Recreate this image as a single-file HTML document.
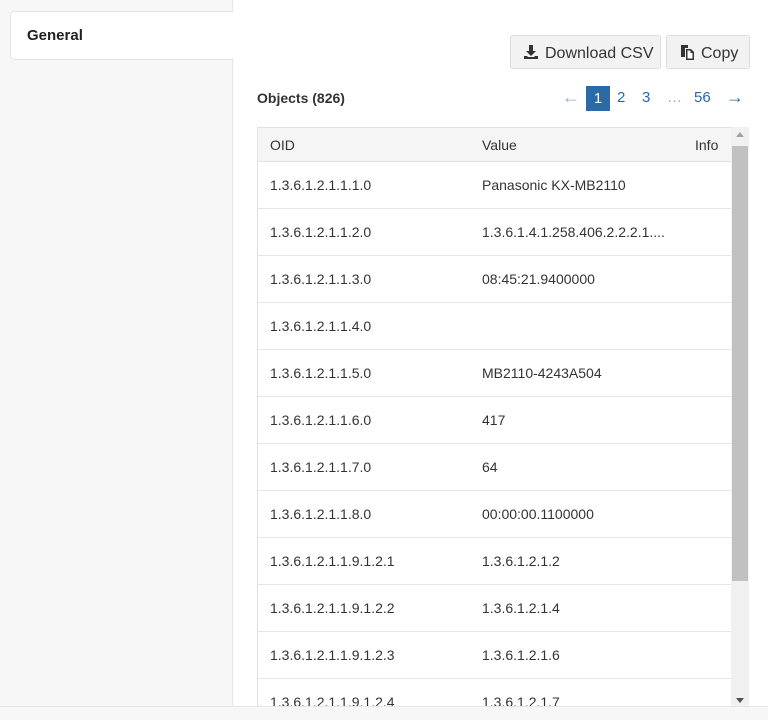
<!DOCTYPE html>
<html><head><style>
body{margin:0;width:768px;height:719px;overflow:hidden;background:#fff;font-family:"Liberation Sans",sans-serif;color:#333;position:relative}
.side{position:absolute;left:0;top:0;width:232px;height:706px;background:#f7f7f7;border-right:1px solid #e6e6e6}
.tab{position:absolute;left:10px;top:11px;width:224px;height:49px;background:#fff;border:1px solid #e4e4e4;border-right:none;border-radius:4px 0 0 4px;box-sizing:border-box;font-size:15px;font-weight:bold;color:#222;padding:15px 0 0 16px}
.bottom{position:absolute;left:0;top:706px;width:768px;height:13px;background:#f7f7f7;border-top:1px solid #e6e6e6}
.btn{position:absolute;top:35px;height:34px;box-sizing:border-box;background:#f2f2f2;border:1px solid #ddd;border-radius:3px;font-size:16px;color:#333;padding:8px 0 0 12px}
.title{position:absolute;left:257px;top:90px;font-size:14px;font-weight:bold;color:#333}
.pg{position:absolute;top:89px;font-size:15px;color:#2a6aa6;line-height:18px}
.ar{font-size:18px;top:88px}
.act{position:absolute;left:586px;top:86px;width:24px;height:25px;background:#2a6aa6;color:#fff;font-size:15px;text-align:center;line-height:25px}
.tbl{position:absolute;left:257px;top:127px;width:474px;height:579px;overflow:hidden;border-left:1px solid #e2e2e2}
.hd{height:35px;background:#f5f5f5;border-top:1px solid #e2e2e2;border-bottom:1px solid #e2e2e2;box-sizing:border-box;font-size:14px;position:relative}
.row{height:47px;border-bottom:1px solid #e6e6e6;box-sizing:border-box;font-size:14px;position:relative;color:#333}
.c1{position:absolute;left:12px;top:15px}.c2{position:absolute;left:224px;top:15px}.c3{position:absolute;left:437px;top:9px}
.hd .c1,.hd .c2{top:9px}
.sb{position:absolute;left:731px;top:127px;width:18px;height:579px;background:#f1f1f1}
.th{position:absolute;left:732px;top:146px;width:16px;height:435px;background:#c1c1c1}
</style></head><body>
<div class="side"></div>
<div class="tab">General</div>
<div class="bottom"></div>
<div class="btn" style="left:510px;width:151px"><svg width="16" height="16" viewBox="0 0 16 16" style="vertical-align:-2px;margin-right:6px"><path d="M6 1h4v6h3l-5 5-5-5h3z M1 12h3l1 1h6l1-1h3v3H1z" fill="#333"/></svg>Download CSV</div>
<div class="btn" style="left:666px;width:84px"><svg width="16" height="16" viewBox="0 0 16 16" style="vertical-align:-2px;margin-right:6px"><path d="M2 1h7v3H6v9H2z" fill="#333"/><path d="M7 5h5l3 3v8H7z" fill="#333"/><path d="M8.5 6.5h3v2.5h2v5.5h-5z" fill="#fff"/></svg>Copy</div>
<div class="title">Objects (826)</div>
<div class="pg ar" style="left:562px;color:#8ab0d4">←</div>
<div class="act">1</div>
<div class="pg" style="left:617px">2</div>
<div class="pg" style="left:642px">3</div>
<div class="pg" style="left:667px;color:#8ab0d4">…</div>
<div class="pg" style="left:694px">56</div>
<div class="pg ar" style="left:726px">→</div>
<div class="tbl">
<div class="hd"><span class="c1">OID</span><span class="c2">Value</span><span class="c3">Info</span></div>
<div class="row"><span class="c1">1.3.6.1.2.1.1.1.0</span><span class="c2">Panasonic KX-MB2110</span></div>
<div class="row"><span class="c1">1.3.6.1.2.1.1.2.0</span><span class="c2">1.3.6.1.4.1.258.406.2.2.2.1....</span></div>
<div class="row"><span class="c1">1.3.6.1.2.1.1.3.0</span><span class="c2">08:45:21.9400000</span></div>
<div class="row"><span class="c1">1.3.6.1.2.1.1.4.0</span><span class="c2"></span></div>
<div class="row"><span class="c1">1.3.6.1.2.1.1.5.0</span><span class="c2">MB2110-4243A504</span></div>
<div class="row"><span class="c1">1.3.6.1.2.1.1.6.0</span><span class="c2">417</span></div>
<div class="row"><span class="c1">1.3.6.1.2.1.1.7.0</span><span class="c2">64</span></div>
<div class="row"><span class="c1">1.3.6.1.2.1.1.8.0</span><span class="c2">00:00:00.1100000</span></div>
<div class="row"><span class="c1">1.3.6.1.2.1.1.9.1.2.1</span><span class="c2">1.3.6.1.2.1.2</span></div>
<div class="row"><span class="c1">1.3.6.1.2.1.1.9.1.2.2</span><span class="c2">1.3.6.1.2.1.4</span></div>
<div class="row"><span class="c1">1.3.6.1.2.1.1.9.1.2.3</span><span class="c2">1.3.6.1.2.1.6</span></div>
<div class="row"><span class="c1">1.3.6.1.2.1.1.9.1.2.4</span><span class="c2">1.3.6.1.2.1.7</span></div>
</div>
<div class="sb"></div><div class="th"></div>
<svg style="position:absolute;left:736px;top:132px" width="8" height="6"><path d="M0 5h8L4 0z" fill="#a3a3a3"/></svg>
<svg style="position:absolute;left:736px;top:698px" width="8" height="6"><path d="M0 0h8L4 5z" fill="#505050"/></svg>
</body></html>
